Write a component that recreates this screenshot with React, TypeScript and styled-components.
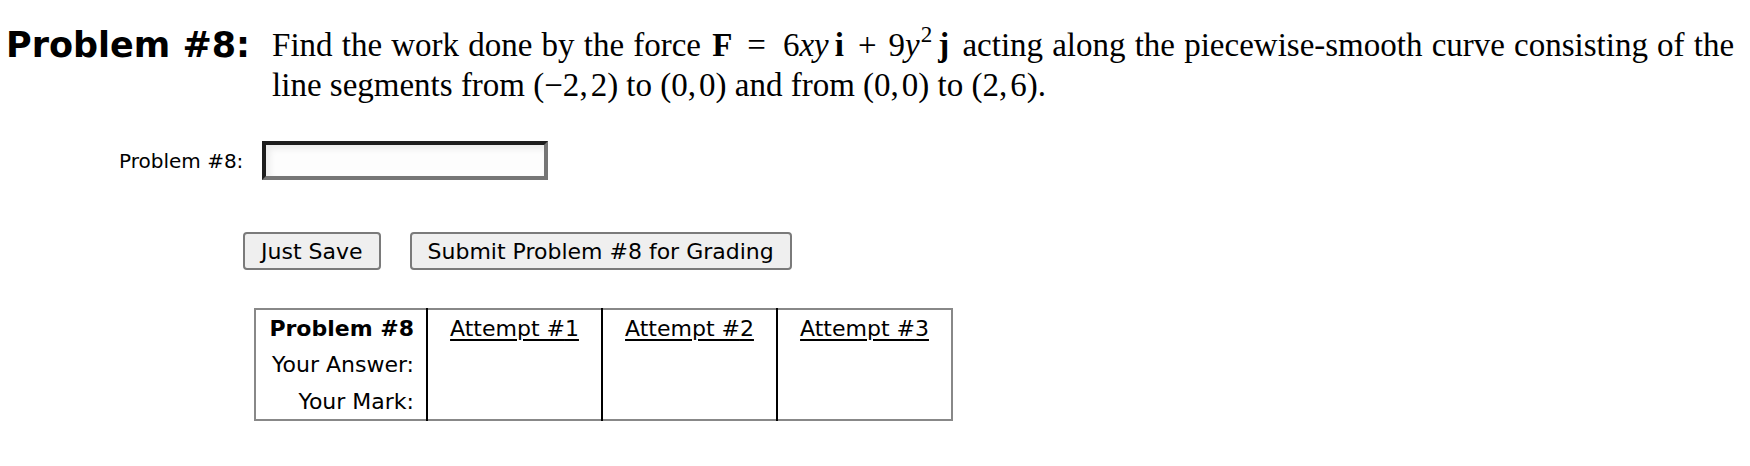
import React from 'react';
import styled, { createGlobalStyle } from 'styled-components';

const GlobalStyle = createGlobalStyle`
  html, body { margin: 0; padding: 0; background: #ffffff; }
  body { font-family: "DejaVu Sans", Verdana, sans-serif; color: #000; }
`;

const Page = styled.div`
  width: 1750px;
  padding-top: 25px;
  box-sizing: border-box;
`;

const Header = styled.div`
  display: flex;
  align-items: flex-start;
  margin-left: 6px;
`;

const Title = styled.h1`
  margin: 0;
  font: bold 35px/40px "DejaVu Sans", Verdana, sans-serif;
  white-space: nowrap;
`;

const Statement = styled.div`
  margin-left: 22px;
  width: 1462px;
  font: 33px/40px "Liberation Serif", "Times New Roman", serif;
`;

const Line = styled.div<{ $justify?: boolean }>`
  text-align: ${(p) => (p.$justify ? 'justify' : 'left')};
  text-align-last: ${(p) => (p.$justify ? 'justify' : 'auto')};
`;

const MathExpr = styled.span`
  display: inline-block;
  white-space: nowrap;
  margin: 0 4px 0 2px;
`;

const Vec = styled.b<{ $gap?: number }>`
  font-weight: bold;
  margin-left: ${(p) => p.$gap ?? 0}px;
`;

const Var = styled.i`
  font-style: italic;
`;

const Rel = styled.span`
  margin: 0 17px 0 15px;
`;

const Bin = styled.span`
  margin: 0 12px 0 14px;
`;

const Sup = styled.sup`
  font-size: 0.7em;
  vertical-align: 0.6em;
  line-height: 0;
  margin-left: 1px;
`;

const Comma = styled.span`
  margin-right: 3px;
`;

const AnswerRow = styled.div`
  display: flex;
  align-items: center;
  gap: 19px;
  margin: 36px 0 0 119px;
`;

const AnswerLabel = styled.label`
  font: 20px "DejaVu Sans", Verdana, sans-serif;
`;

const AnswerInput = styled.input`
  box-sizing: border-box;
  width: 286px;
  height: 39px;
  margin: 0;
  padding: 0 6px;
  border-style: solid;
  border-width: 4px;
  border-color: #1d1d1d #767676 #767676 #1d1d1d;
  background: #fdfdfd;
  box-shadow: inset 4px 4px 6px rgba(0, 0, 0, 0.07);
  font: 20px "DejaVu Sans", Verdana, sans-serif;
  outline: none;
`;

const ButtonRow = styled.div`
  display: flex;
  gap: 29px;
  margin: 52px 0 0 243px;
`;

const Button = styled.button`
  box-sizing: border-box;
  height: 38px;
  padding: 0 16px;
  border: 2px solid #7a7a7a;
  border-radius: 4px;
  background: #efefef;
  color: #000;
  font: 22px "DejaVu Sans", Verdana, sans-serif;
  white-space: nowrap;
`;

const Results = styled.table`
  margin: 38px 0 0 254px;
  border-collapse: collapse;
  border: 2px solid #888;
  font: 22px "DejaVu Sans", Verdana, sans-serif;
`;

const Cell = styled.td<{ $label?: boolean; $bold?: boolean }>`
  box-sizing: border-box;
  width: ${(p) => (p.$label ? 172 : 175)}px;
  height: 37px;
  padding: 0 12px;
  text-align: ${(p) => (p.$label ? 'right' : 'center')};
  font-weight: ${(p) => (p.$bold ? 'bold' : 'normal')};
  border-left: ${(p) => (p.$label ? 'none' : '2px solid #000')};
  white-space: nowrap;
  vertical-align: middle;
`;

const AttemptLink = styled.a`
  color: #000;
  text-decoration: underline;
  text-underline-offset: 3px;
`;

export default function App() {
  const attempts = [1, 2, 3];
  return (
    <>
      <GlobalStyle />
      <Page>
        <Header>
          <Title>Problem #8:</Title>
          <Statement>
            <Line $justify>
              Find the work done by the force{' '}
              <MathExpr>
                <Vec>F</Vec>
                <Rel>=</Rel>6<Var>xy</Var>
                <Vec $gap={6}>i</Vec>
                <Bin>+</Bin>9<Var>y</Var>
                <Sup>2</Sup>
                <Vec $gap={6}>j</Vec>
              </MathExpr>{' '}
              acting along the piecewise-smooth curve consisting of the
            </Line>
            <Line>
              line segments from (−2<Comma>,</Comma>2) to (0<Comma>,</Comma>0) and from (0<Comma>,</Comma>0) to (2<Comma>,</Comma>6).
            </Line>
          </Statement>
        </Header>

        <AnswerRow>
          <AnswerLabel htmlFor="answer8">Problem #8:</AnswerLabel>
          <AnswerInput id="answer8" type="text" />
        </AnswerRow>

        <ButtonRow>
          <Button type="button">Just Save</Button>
          <Button type="button">Submit Problem #8 for Grading</Button>
        </ButtonRow>

        <Results>
          <tbody>
            <tr>
              <Cell $label $bold>Problem #8</Cell>
              {attempts.map((n) => (
                <Cell key={n}>
                  <AttemptLink href="#">Attempt #{n}</AttemptLink>
                </Cell>
              ))}
            </tr>
            <tr>
              <Cell $label>Your Answer:</Cell>
              {attempts.map((n) => (
                <Cell key={n} />
              ))}
            </tr>
            <tr>
              <Cell $label>Your Mark:</Cell>
              {attempts.map((n) => (
                <Cell key={n} />
              ))}
            </tr>
          </tbody>
        </Results>
      </Page>
    </>
  );
}
